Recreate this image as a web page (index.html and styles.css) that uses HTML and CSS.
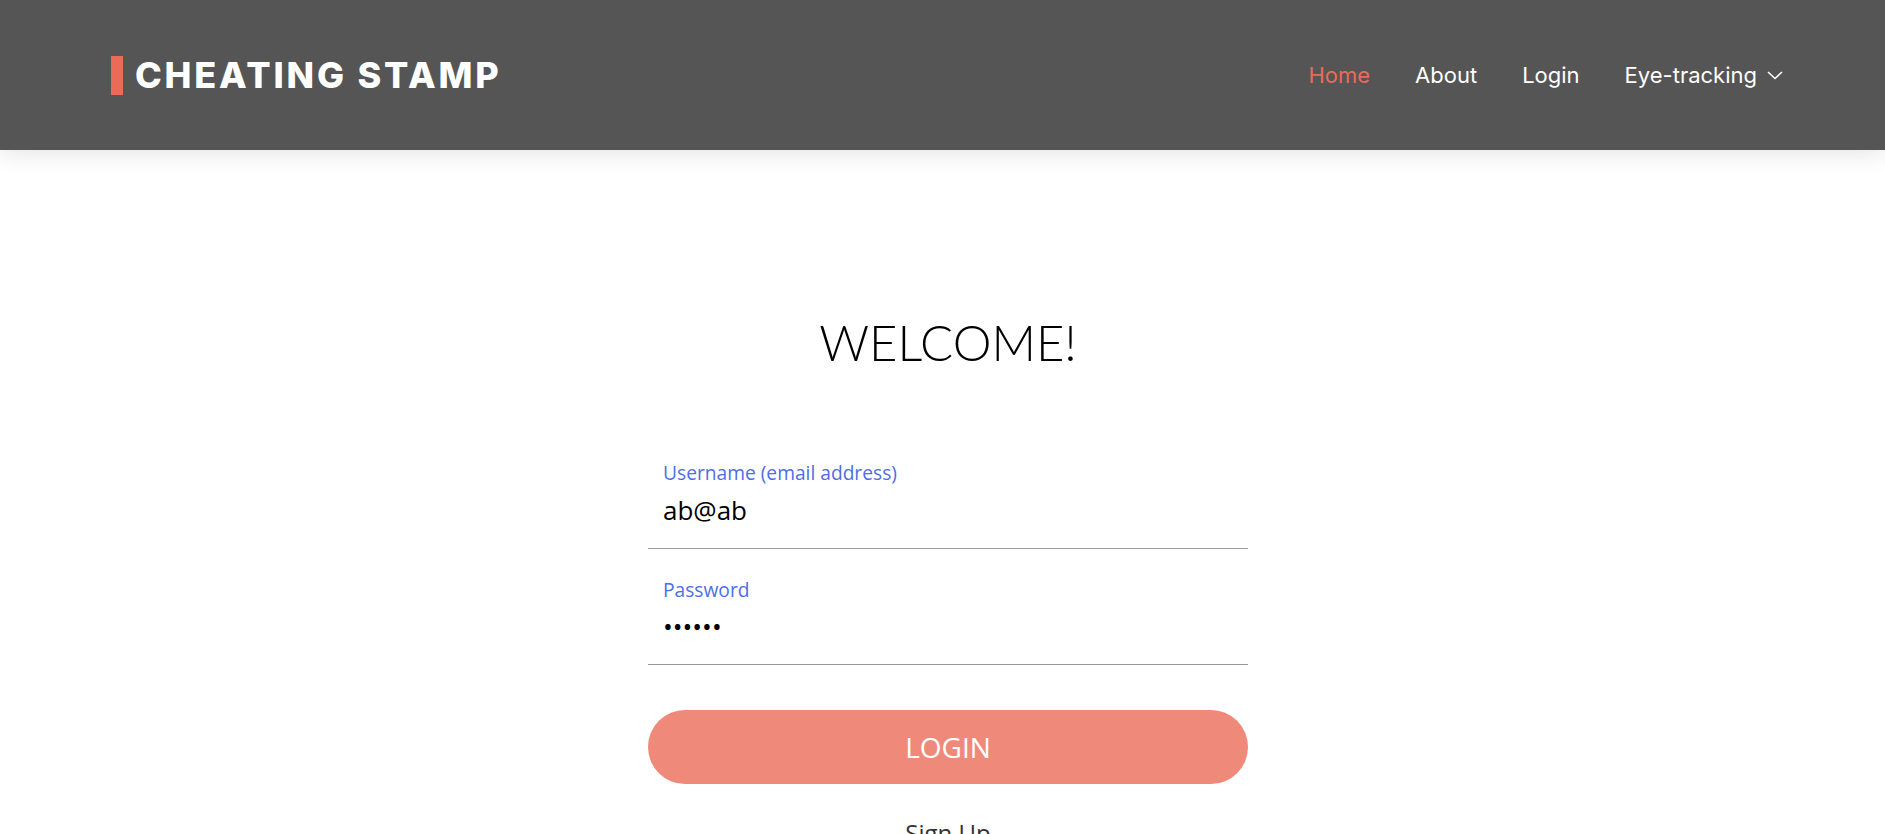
FILE: index.html
```html
<!DOCTYPE html>
<html lang="en">
<head>
    <meta charset="UTF-8">
    <meta name="viewport" content="width=device-width, initial-scale=1.0">
    <title>Cheating Stamp - Login</title>
    <link rel="stylesheet" href="styles.css">
</head>
<body>
    <header class="header">
        <a class="logo" href="#">
            <span class="logo-bar"></span>
            <span class="logo-text">CHEATING STAMP</span>
        </a>
        <nav class="nav">
            <a class="nav-link active" href="#">Home</a>
            <a class="nav-link" href="#">About</a>
            <a class="nav-link" href="#">Login</a>
            <a class="nav-link dropdown" href="#">Eye-tracking
                <svg class="chevron" width="16" height="9" viewBox="0 0 16 9">
                    <path d="M1 1 L8 7.5 L15 1" fill="none" stroke="#fff" stroke-width="1.6"/>
                </svg>
            </a>
        </nav>
    </header>

    <main class="main">
        <h1 class="title">WELCOME!</h1>
        <form class="login-form" onsubmit="return false;">
            <div class="field">
                <label for="username">Username (email address)</label>
                <input type="text" id="username" value="ab@ab">
            </div>
            <div class="field">
                <label for="password">Password</label>
                <input type="password" id="password" value="abcdef">
            </div>
            <button class="login-btn" type="submit">LOGIN</button>
            <a class="signup" href="#">Sign Up</a>
        </form>
    </main>
</body>
</html>
```

FILE: styles.css
```css
body {
    margin: 0;
    padding: 0;
    font-family: "Open Sans", sans-serif;
    background-color: #fff;
    color: #333;
}

a {
    text-decoration: none;
}

.header {
    height: 150px;
    background-color: #555555;
    display: flex;
    align-items: center;
    justify-content: space-between;
    padding: 0 102px 0 111px;
    box-shadow: 0 2px 24px rgba(0, 0, 0, 0.12);
    position: relative;
}

.logo {
    display: flex;
    align-items: center;
    gap: 12px;
}

.logo-bar {
    width: 12px;
    height: 39px;
    background-color: #ec6a58;
}

.logo-text {
    font-family: "Inter", sans-serif;
    font-weight: 800;
    font-size: 36px;
    letter-spacing: 2.8px;
    color: #fff;
}

.nav {
    display: flex;
    align-items: center;
    gap: 45px;
}

.nav-link {
    font-family: "Inter", sans-serif;
    font-size: 22px;
    color: #fff;
    display: flex;
    align-items: center;
}

.nav-link.active {
    color: #ec6a58;
}

.chevron {
    margin-left: 10px;
}

.main {
    padding-left: 11px;
    text-align: center;
}

.title {
    font-family: "Lato", sans-serif;
    font-weight: 300;
    font-size: 49px;
    line-height: 1.2;
    color: #000;
    margin: 163px 0 0;
}

.login-form {
    width: 600px;
    margin: 87px auto 0;
    display: flex;
    flex-direction: column;
    text-align: left;
}

.field {
    padding: 0 15px 18px;
    border-bottom: 1px solid #9a9a9a;
    display: flex;
    flex-direction: column;
    gap: 3px;
}

.field + .field {
    margin-top: 27px;
}

.field label {
    font-size: 19.2px;
    line-height: 1.5;
    color: #4d6fe3;
}

.field input {
    border: none;
    outline: none;
    padding: 0;
    font-family: "Open Sans", sans-serif;
    font-size: 26px;
    line-height: 1.5;
    height: 39px;
    color: #000;
    background: transparent;
}

.login-btn {
    margin-top: 45px;
    height: 74px;
    border: none;
    border-radius: 37px;
    background-color: #ef8a7a;
    color: #fff;
    font-family: "Open Sans", sans-serif;
    font-size: 28px;
    cursor: pointer;
}

.signup {
    margin-top: 31px;
    text-align: center;
    font-size: 24px;
    line-height: 1.5;
    color: #333;
}
```
